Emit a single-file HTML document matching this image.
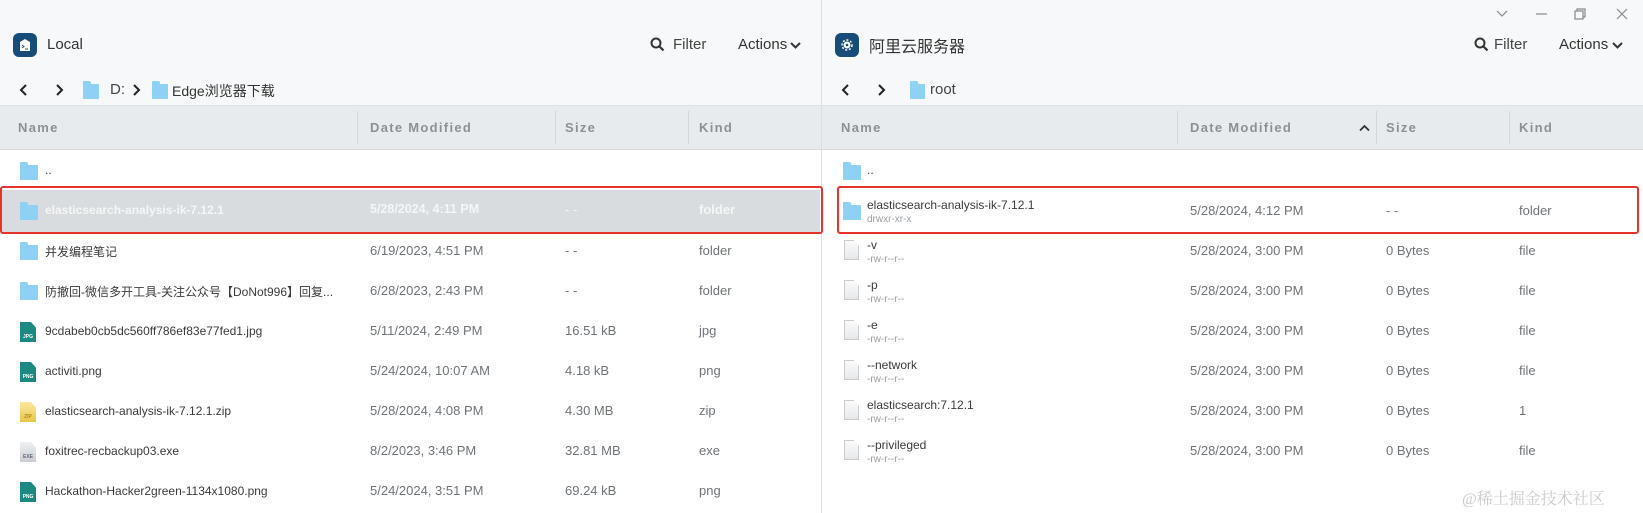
<!DOCTYPE html><html><head><meta charset="utf-8"><style>
*{margin:0;padding:0;box-sizing:border-box}
body{width:1643px;height:513px;overflow:hidden;background:#fff;font-family:"Liberation Sans","Noto Sans CJK SC",sans-serif;color:#333;position:relative}
.a{position:absolute;white-space:nowrap}
.hdr{position:absolute;top:0;height:105px;background:#f7f8f9}
.ch{position:absolute;top:105px;height:45px;background:#e8ebed;border-top:1px solid #dde1e4;border-bottom:1px solid #d6dadd}
.cht{position:absolute;top:120px;font-size:13px;font-weight:bold;color:#8a9196;letter-spacing:1.3px}
.sep{position:absolute;top:111px;width:1px;height:33px;background:#d3d7da}
.t{font-size:12px;color:#3a3a3a}
.g{font-size:13px;color:#6f7478}
.p{font-size:10px;color:#9a9ea2}
.fold{position:absolute;width:18px;height:15px;background:#8fd0f5;border-radius:1px}
.fold:before{content:"";position:absolute;left:0;top:-3px;width:8px;height:4px;background:#8fd0f5;border-radius:1px 2px 0 0}
.doc{position:absolute;width:15px;height:20px;background:linear-gradient(#fbfbfb,#e6e8ea);border:1px solid #c8cccf;clip-path:polygon(0 0,65% 0,100% 30%,100% 100%,0 100%)}
.fi{position:absolute;width:16px;height:20px;clip-path:polygon(0 0,68% 0,100% 28%,100% 100%,0 100%);font-size:5px;color:#fff;text-align:center;line-height:30px;font-weight:bold}
</style></head><body>
<div class="hdr" style="left:0;width:821px"></div>
<div class="hdr" style="left:822px;width:821px"></div>
<div class="a" style="left:821px;top:0;width:1px;height:513px;background:#dcdfe2"></div>

<!-- window controls -->
<svg class="a" style="left:1495px;top:8px" width="140" height="12" viewBox="0 0 140 12"><path d="M2 3l5 5 5-5" fill="none" stroke="#888" stroke-width="1.2"/><path d="M41 6h11" stroke="#888" stroke-width="1.2"/><rect x="80" y="3" width="8" height="8" fill="none" stroke="#888" stroke-width="1.2"/><path d="M82 3V1h8v8h-2" fill="none" stroke="#888" stroke-width="1.2"/><path d="M122 1l10 10M132 1l-10 10" stroke="#888" stroke-width="1.2"/></svg>

<!-- left header -->
<div class="a" style="left:13px;top:33px;width:24px;height:24px;background:#184c78;border-radius:6px"></div>
<svg class="a" style="left:18px;top:37px" width="14" height="16"><path d="M2 5l5-3 5 3v9H2z" fill="#fff"/><path d="M4 8l2 1.5L4 11M7 12h3" stroke="#184c78" stroke-width="1" fill="none"/></svg>
<div class="a" style="left:47px;top:36px;font-size:15px;color:#333">Local</div>
<svg class="a" style="left:650px;top:37px" width="15" height="15"><circle cx="6" cy="6" r="4.5" fill="none" stroke="#333" stroke-width="2"/><path d="M9.5 9.5l4 4" stroke="#333" stroke-width="2.2"/></svg>
<div class="a" style="left:673px;top:36px;font-size:15px;color:#444">Filter</div>
<div class="a" style="left:738px;top:36px;font-size:15px;color:#333">Actions</div>
<svg class="a" style="left:790px;top:42px" width="11" height="8"><path d="M1 1l4.5 4.5L10 1" fill="none" stroke="#333" stroke-width="2"/></svg>
<svg class="a" style="left:18px;top:83px" width="60" height="14"><path d="M8 2L3 7l5 5" fill="none" stroke="#222" stroke-width="2"/><path d="M39 2l5 5-5 5" fill="none" stroke="#222" stroke-width="2"/></svg>
<div class="fold" style="left:83px;top:84px;width:16px"></div>
<div class="a" style="left:110px;top:81px;font-size:15px;color:#444">D:</div>
<svg class="a" style="left:132px;top:83px" width="10" height="14"><path d="M2 2l5 5-5 5" fill="none" stroke="#222" stroke-width="2"/></svg>
<div class="fold" style="left:152px;top:84px;width:16px"></div>
<div class="a" style="left:172px;top:81px;font-size:14px;color:#333">Edge浏览器下载</div>

<!-- right header -->
<div class="a" style="left:835px;top:33px;width:24px;height:24px;background:#184c78;border-radius:6px"></div>
<svg class="a" style="left:841px;top:39px" width="12" height="12"><circle cx="6" cy="6" r="3.5" fill="#fff"/><circle cx="6" cy="6" r="5" fill="none" stroke="#fff" stroke-width="1.5" stroke-dasharray="2 1.8"/><circle cx="6" cy="6" r="1.3" fill="#184c78"/></svg>
<div class="a" style="left:869px;top:33px;font-size:16px;color:#333">阿里云服务器</div>
<svg class="a" style="left:1474px;top:37px" width="15" height="15"><circle cx="6" cy="6" r="4.5" fill="none" stroke="#333" stroke-width="2"/><path d="M9.5 9.5l4 4" stroke="#333" stroke-width="2.2"/></svg>
<div class="a" style="left:1494px;top:36px;font-size:15px;color:#444">Filter</div>
<div class="a" style="left:1559px;top:36px;font-size:15px;color:#333">Actions</div>
<svg class="a" style="left:1612px;top:42px" width="11" height="8"><path d="M1 1l4.5 4.5L10 1" fill="none" stroke="#333" stroke-width="2"/></svg>
<svg class="a" style="left:840px;top:83px" width="60" height="14"><path d="M8 2L3 7l5 5" fill="none" stroke="#222" stroke-width="2"/><path d="M39 2l5 5-5 5" fill="none" stroke="#222" stroke-width="2"/></svg>
<div class="fold" style="left:910px;top:84px;width:15px"></div>
<div class="a" style="left:930px;top:81px;font-size:15px;color:#444">root</div>

<!-- column headers -->
<div class="ch" style="left:0;width:821px"></div>
<div class="ch" style="left:822px;width:821px"></div>
<div class="cht" style="left:18px">Name</div><div class="sep" style="left:357px"></div>
<div class="cht" style="left:370px">Date Modified</div><div class="sep" style="left:555px"></div>
<div class="cht" style="left:565px">Size</div><div class="sep" style="left:688px"></div>
<div class="cht" style="left:699px">Kind</div>
<div class="cht" style="left:841px">Name</div><div class="sep" style="left:1177px"></div>
<div class="cht" style="left:1190px">Date Modified</div>
<svg class="a" style="left:1359px;top:124px" width="11" height="8"><path d="M1 6.5L5.5 2 10 6.5" fill="none" stroke="#333" stroke-width="1.8"/></svg>
<div class="sep" style="left:1376px"></div>
<div class="cht" style="left:1386px">Size</div><div class="sep" style="left:1509px"></div>
<div class="cht" style="left:1519px">Kind</div>

<!-- left rows -->
<div class="fold" style="left:20px;top:165px"></div><div class="a t" style="left:45px;top:163px">..</div>
<div class="a" style="left:2px;top:190px;width:818px;height:42px;background:#d8dcdf"></div>
<div class="a" style="left:0;top:186px;width:823px;height:48px;border:2.5px solid #e8332c;border-radius:3px"></div>
<div class="fold" style="left:20px;top:205px"></div>
<div class="a" style="left:45px;top:203px;font-size:12px;color:#f4f6f7;font-weight:bold">elasticsearch-analysis-ik-7.12.1</div>
<div class="a" style="left:370px;top:202px;font-size:12.5px;color:#f4f6f7;font-weight:bold">5/28/2024, 4:11 PM</div>
<div class="a" style="left:565px;top:202px;font-size:13px;color:#f4f6f7">- -</div>
<div class="a" style="left:699px;top:202px;font-size:13px;color:#f4f6f7;font-weight:bold">folder</div>

<div class="fold" style="left:20px;top:245px"></div><div class="a t" style="left:45px;top:243px">并发编程笔记</div>
<div class="a g" style="left:370px;top:243px">6/19/2023, 4:51 PM</div><div class="a g" style="left:565px;top:243px">- -</div><div class="a g" style="left:699px;top:243px">folder</div>

<div class="fold" style="left:20px;top:285px"></div><div class="a t" style="left:45px;top:283px">防撤回-微信多开工具-关注公众号【DoNot996】回复...</div>
<div class="a g" style="left:370px;top:283px">6/28/2023, 2:43 PM</div><div class="a g" style="left:565px;top:283px">- -</div><div class="a g" style="left:699px;top:283px">folder</div>

<div class="fi" style="left:20px;top:322px;background:#1b8a83">JPG</div><div class="a t" style="left:45px;top:324px">9cdabeb0cb5dc560ff786ef83e77fed1.jpg</div>
<div class="a g" style="left:370px;top:323px">5/11/2024, 2:49 PM</div><div class="a g" style="left:565px;top:323px">16.51 kB</div><div class="a g" style="left:699px;top:323px">jpg</div>

<div class="fi" style="left:20px;top:362px;background:#1b8a83">PNG</div><div class="a t" style="left:45px;top:364px">activiti.png</div>
<div class="a g" style="left:370px;top:363px">5/24/2024, 10:07 AM</div><div class="a g" style="left:565px;top:363px">4.18 kB</div><div class="a g" style="left:699px;top:363px">png</div>

<div class="fi" style="left:20px;top:402px;background:linear-gradient(#fbe9a0,#e9c64a);color:#b38a10">ZIP</div><div class="a t" style="left:45px;top:404px">elasticsearch-analysis-ik-7.12.1.zip</div>
<div class="a g" style="left:370px;top:403px">5/28/2024, 4:08 PM</div><div class="a g" style="left:565px;top:403px">4.30 MB</div><div class="a g" style="left:699px;top:403px">zip</div>

<div class="fi" style="left:20px;top:442px;background:linear-gradient(#eef0f2,#c9ced3);color:#667">EXE</div><div class="a t" style="left:45px;top:444px">foxitrec-recbackup03.exe</div>
<div class="a g" style="left:370px;top:443px">8/2/2023, 3:46 PM</div><div class="a g" style="left:565px;top:443px">32.81 MB</div><div class="a g" style="left:699px;top:443px">exe</div>

<div class="fi" style="left:20px;top:482px;background:#1b8a83">PNG</div><div class="a t" style="left:45px;top:484px">Hackathon-Hacker2green-1134x1080.png</div>
<div class="a g" style="left:370px;top:483px">5/24/2024, 3:51 PM</div><div class="a g" style="left:565px;top:483px">69.24 kB</div><div class="a g" style="left:699px;top:483px">png</div>

<!-- right rows -->
<div class="fold" style="left:843px;top:165px"></div><div class="a t" style="left:867px;top:163px">..</div>
<div class="a" style="left:837px;top:186px;width:802px;height:48px;border:2.5px solid #e8332c;border-radius:3px"></div>
<div class="fold" style="left:843px;top:205px"></div>
<div class="a t" style="left:867px;top:198px">elasticsearch-analysis-ik-7.12.1</div><div class="a p" style="left:867px;top:214px">drwxr-xr-x</div>
<div class="a g" style="left:1190px;top:203px">5/28/2024, 4:12 PM</div><div class="a g" style="left:1386px;top:203px">- -</div><div class="a g" style="left:1519px;top:203px">folder</div>

<div class="doc" style="left:844px;top:240px"></div><div class="a t" style="left:867px;top:238px">-v</div><div class="a p" style="left:867px;top:254px">-rw-r--r--</div>
<div class="a g" style="left:1190px;top:243px">5/28/2024, 3:00 PM</div><div class="a g" style="left:1386px;top:243px">0 Bytes</div><div class="a g" style="left:1519px;top:243px">file</div>

<div class="doc" style="left:844px;top:280px"></div><div class="a t" style="left:867px;top:278px">-p</div><div class="a p" style="left:867px;top:294px">-rw-r--r--</div>
<div class="a g" style="left:1190px;top:283px">5/28/2024, 3:00 PM</div><div class="a g" style="left:1386px;top:283px">0 Bytes</div><div class="a g" style="left:1519px;top:283px">file</div>

<div class="doc" style="left:844px;top:320px"></div><div class="a t" style="left:867px;top:318px">-e</div><div class="a p" style="left:867px;top:334px">-rw-r--r--</div>
<div class="a g" style="left:1190px;top:323px">5/28/2024, 3:00 PM</div><div class="a g" style="left:1386px;top:323px">0 Bytes</div><div class="a g" style="left:1519px;top:323px">file</div>

<div class="doc" style="left:844px;top:360px"></div><div class="a t" style="left:867px;top:358px">--network</div><div class="a p" style="left:867px;top:374px">-rw-r--r--</div>
<div class="a g" style="left:1190px;top:363px">5/28/2024, 3:00 PM</div><div class="a g" style="left:1386px;top:363px">0 Bytes</div><div class="a g" style="left:1519px;top:363px">file</div>

<div class="doc" style="left:844px;top:400px"></div><div class="a t" style="left:867px;top:398px">elasticsearch:7.12.1</div><div class="a p" style="left:867px;top:414px">-rw-r--r--</div>
<div class="a g" style="left:1190px;top:403px">5/28/2024, 3:00 PM</div><div class="a g" style="left:1386px;top:403px">0 Bytes</div><div class="a g" style="left:1519px;top:403px">1</div>

<div class="doc" style="left:844px;top:440px"></div><div class="a t" style="left:867px;top:438px">--privileged</div><div class="a p" style="left:867px;top:454px">-rw-r--r--</div>
<div class="a g" style="left:1190px;top:443px">5/28/2024, 3:00 PM</div><div class="a g" style="left:1386px;top:443px">0 Bytes</div><div class="a g" style="left:1519px;top:443px">file</div>

<div class="a" style="left:1462px;top:486px;font-size:16px;color:#c9cbcd;font-family:'Liberation Serif','Noto Serif CJK SC',serif">@稀土掘金技术社区</div>
</body></html>
